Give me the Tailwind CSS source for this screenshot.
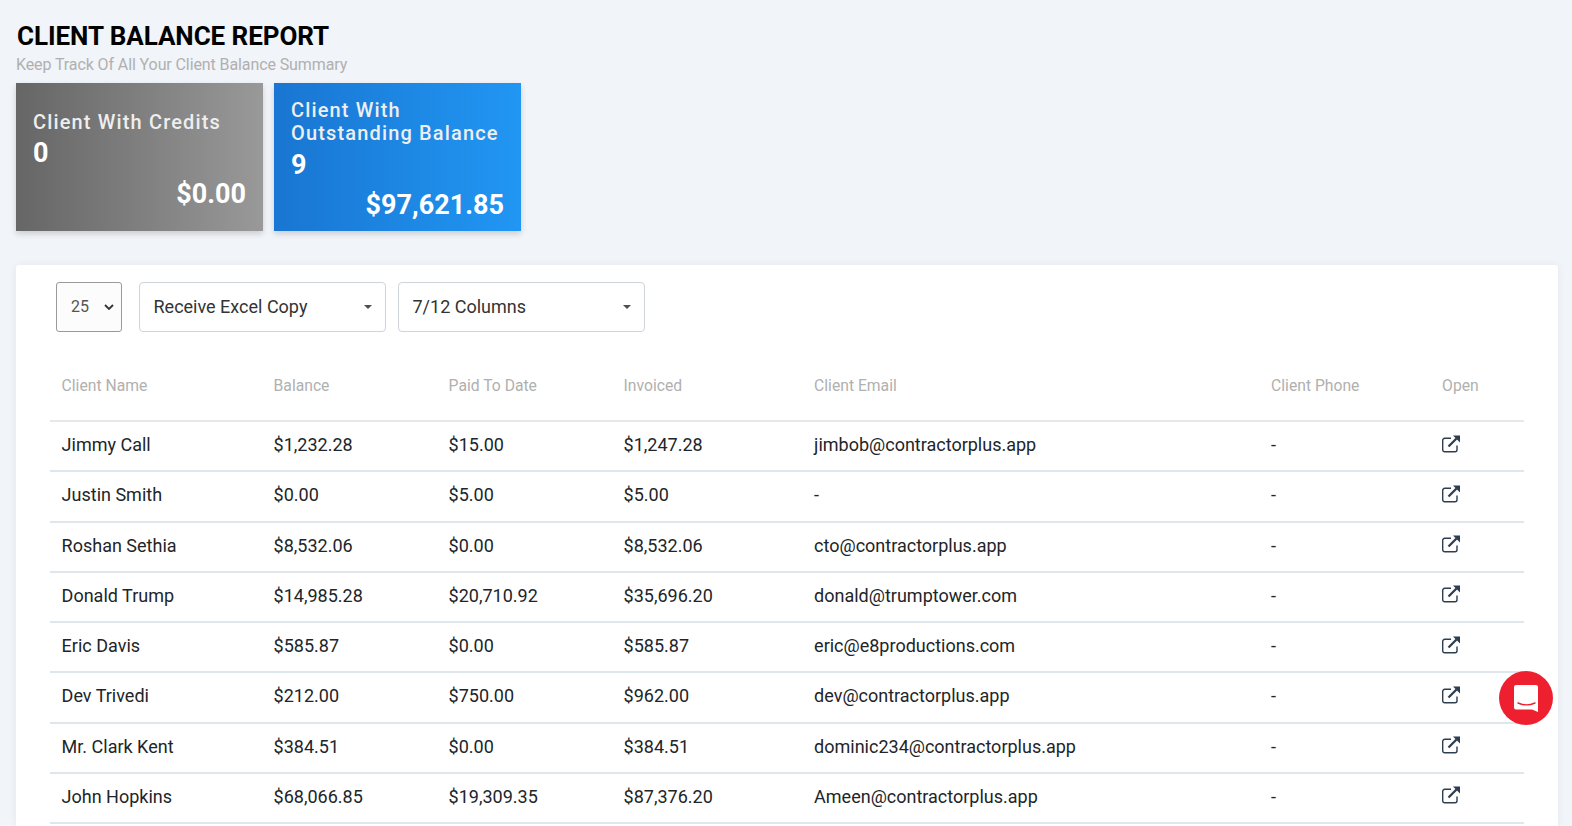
<!doctype html>
<html><head><meta charset="utf-8"><script src="https://cdn.jsdelivr.net/npm/@tailwindcss/browser@4"></script></head>
<body class="h-[826px] overflow-hidden bg-[#f1f4f9] font-['Roboto',sans-serif]">
<div class="px-4 pt-[19px]">
<h1 class="text-[26px] leading-[34px] font-bold text-black tracking-[-0.06px] pl-[1px]">CLIENT BALANCE REPORT</h1>
<p class="text-base leading-[22px] mt-[1px] text-[#b0b0b0] tracking-[-0.1px]">Keep Track Of All Your Client Balance Summary</p>
<div class="flex gap-[11px] mt-[7px]">
<div class="w-[247px] h-[148px] px-[17px] pt-[9px] flex flex-col justify-center text-white bg-gradient-to-r from-[#666666] to-[#999999] shadow-[0_3px_6px_rgba(0,0,0,0.16)]">
<div class="text-[20px] leading-[23px] font-medium tracking-[1.15px] text-[#eeeeee]">Client With Credits</div>
<div class="text-[27px] leading-[36px] font-bold mt-[1px]">0</div>
<div class="text-[27px] leading-[36px] font-bold text-right mt-[5px]">$0.00</div>
</div>
<div class="w-[247px] h-[148px] px-[17px] pt-[7px] flex flex-col justify-center text-white bg-gradient-to-r from-[#1976d2] to-[#2196f3] shadow-[0_3px_6px_rgba(0,0,0,0.16)]">
<div class="text-[20px] leading-[23px] font-medium tracking-[1.15px] text-[#eeeeee]">Client With<br>Outstanding Balance</div>
<div class="text-[27px] leading-[36px] font-bold mt-[2px]">9</div>
<div class="text-[27px] leading-[36px] font-bold text-right mt-[4px]">$97,621.85</div>
</div>
</div>
</div>
<div class="mx-4 mt-[34px] mr-[14px] h-[561px] overflow-hidden bg-white rounded-t-[3px] shadow-[0_0_8px_rgba(0,0,0,0.06)] px-[34px] pt-[17px]">
<div class="flex items-center pl-[6px]">
<div class="w-[66px] h-[50px] flex items-center justify-between pl-[14px] pr-[7px] bg-[#fcfcfc] border border-[#9a9a9a] rounded-[3px] text-base text-[#555555]">25
<svg class="w-[10px] h-[6px]" viewBox="0 0 10 6" fill="none" stroke="#333" stroke-width="1.8"><path d="M1 1l4 4 4-4"/></svg></div>
<div class="ml-[17px] w-[247px] h-[50px] flex items-center justify-between pl-[13.5px] pr-[13px] bg-white border border-[#ced4da] rounded-[4px] text-[18px] text-[#333333]"><span class="pb-[2px]">Receive Excel Copy</span><span class="w-0 h-0 border-x-[4px] border-x-transparent border-t-[4px] border-t-[#495057]"></span></div>
<div class="ml-[12px] w-[247px] h-[50px] flex items-center justify-between pl-[13.5px] pr-[13px] bg-white border border-[#ced4da] rounded-[4px] text-[18px] text-[#333333]"><span class="pb-[2px]">7/12 Columns</span><span class="w-0 h-0 border-x-[4px] border-x-transparent border-t-[4px] border-t-[#495057]"></span></div>
</div>
<table class="mt-[22px] w-[1474px] table-fixed border-collapse text-[18px] text-[#212529]">
<colgroup><col class="w-[212px]"><col class="w-[175px]"><col class="w-[175px]"><col class="w-[190.5px]"><col class="w-[457px]"><col class="w-[171px]"><col></colgroup>
<thead><tr class="h-[67px] border-b-2 border-[#e8e8e8] text-left text-[15.7px] text-[#b0b0b0] [&_th]:font-normal [&_th]:pl-[11.6px] [&_th]:pb-[2px]">
<th>Client Name</th><th>Balance</th><th>Paid To Date</th><th>Invoiced</th><th>Client Email</th><th>Client Phone</th><th>Open</th></tr></thead>
<tbody class="[&_td]:pl-[11.6px] [&_td]:pb-[3px] [&_tr]:h-[50.25px] [&_tr]:border-b-2 [&_tr]:border-[#dee6ee]">
<tr><td>Jimmy Call</td><td>$1,232.28</td><td>$15.00</td><td>$1,247.28</td><td>jimbob@contractorplus.app</td><td>-</td><td><svg class="w-[18px] h-[18px] -translate-y-[1px]" viewBox="0 0 18 18" fill="none" stroke="#2c3e50" stroke-width="1.4"><path d="M15 10.5v4.3a2 2 0 0 1-2 2H2.7a2 2 0 0 1-2-2V5.3a2 2 0 0 1 2-2H9"/><path d="M6.5 11.5L14.5 3.5" stroke-width="2.3"/><path d="M11 .5h7v7z" fill="#2c3e50" stroke="none"/></svg></td></tr>
<tr><td>Justin Smith</td><td>$0.00</td><td>$5.00</td><td>$5.00</td><td>-</td><td>-</td><td><svg class="w-[18px] h-[18px] -translate-y-[1px]" viewBox="0 0 18 18" fill="none" stroke="#2c3e50" stroke-width="1.4"><path d="M15 10.5v4.3a2 2 0 0 1-2 2H2.7a2 2 0 0 1-2-2V5.3a2 2 0 0 1 2-2H9"/><path d="M6.5 11.5L14.5 3.5" stroke-width="2.3"/><path d="M11 .5h7v7z" fill="#2c3e50" stroke="none"/></svg></td></tr>
<tr><td>Roshan Sethia</td><td>$8,532.06</td><td>$0.00</td><td>$8,532.06</td><td>cto@contractorplus.app</td><td>-</td><td><svg class="w-[18px] h-[18px] -translate-y-[1px]" viewBox="0 0 18 18" fill="none" stroke="#2c3e50" stroke-width="1.4"><path d="M15 10.5v4.3a2 2 0 0 1-2 2H2.7a2 2 0 0 1-2-2V5.3a2 2 0 0 1 2-2H9"/><path d="M6.5 11.5L14.5 3.5" stroke-width="2.3"/><path d="M11 .5h7v7z" fill="#2c3e50" stroke="none"/></svg></td></tr>
<tr><td>Donald Trump</td><td>$14,985.28</td><td>$20,710.92</td><td>$35,696.20</td><td>donald@trumptower.com</td><td>-</td><td><svg class="w-[18px] h-[18px] -translate-y-[1px]" viewBox="0 0 18 18" fill="none" stroke="#2c3e50" stroke-width="1.4"><path d="M15 10.5v4.3a2 2 0 0 1-2 2H2.7a2 2 0 0 1-2-2V5.3a2 2 0 0 1 2-2H9"/><path d="M6.5 11.5L14.5 3.5" stroke-width="2.3"/><path d="M11 .5h7v7z" fill="#2c3e50" stroke="none"/></svg></td></tr>
<tr><td>Eric Davis</td><td>$585.87</td><td>$0.00</td><td>$585.87</td><td>eric@e8productions.com</td><td>-</td><td><svg class="w-[18px] h-[18px] -translate-y-[1px]" viewBox="0 0 18 18" fill="none" stroke="#2c3e50" stroke-width="1.4"><path d="M15 10.5v4.3a2 2 0 0 1-2 2H2.7a2 2 0 0 1-2-2V5.3a2 2 0 0 1 2-2H9"/><path d="M6.5 11.5L14.5 3.5" stroke-width="2.3"/><path d="M11 .5h7v7z" fill="#2c3e50" stroke="none"/></svg></td></tr>
<tr><td>Dev Trivedi</td><td>$212.00</td><td>$750.00</td><td>$962.00</td><td>dev@contractorplus.app</td><td>-</td><td><svg class="w-[18px] h-[18px] -translate-y-[1px]" viewBox="0 0 18 18" fill="none" stroke="#2c3e50" stroke-width="1.4"><path d="M15 10.5v4.3a2 2 0 0 1-2 2H2.7a2 2 0 0 1-2-2V5.3a2 2 0 0 1 2-2H9"/><path d="M6.5 11.5L14.5 3.5" stroke-width="2.3"/><path d="M11 .5h7v7z" fill="#2c3e50" stroke="none"/></svg></td></tr>
<tr><td>Mr. Clark Kent</td><td>$384.51</td><td>$0.00</td><td>$384.51</td><td>dominic234@contractorplus.app</td><td>-</td><td><svg class="w-[18px] h-[18px] -translate-y-[1px]" viewBox="0 0 18 18" fill="none" stroke="#2c3e50" stroke-width="1.4"><path d="M15 10.5v4.3a2 2 0 0 1-2 2H2.7a2 2 0 0 1-2-2V5.3a2 2 0 0 1 2-2H9"/><path d="M6.5 11.5L14.5 3.5" stroke-width="2.3"/><path d="M11 .5h7v7z" fill="#2c3e50" stroke="none"/></svg></td></tr>
<tr><td>John Hopkins</td><td>$68,066.85</td><td>$19,309.35</td><td>$87,376.20</td><td>Ameen@contractorplus.app</td><td>-</td><td><svg class="w-[18px] h-[18px] -translate-y-[1px]" viewBox="0 0 18 18" fill="none" stroke="#2c3e50" stroke-width="1.4"><path d="M15 10.5v4.3a2 2 0 0 1-2 2H2.7a2 2 0 0 1-2-2V5.3a2 2 0 0 1 2-2H9"/><path d="M6.5 11.5L14.5 3.5" stroke-width="2.3"/><path d="M11 .5h7v7z" fill="#2c3e50" stroke="none"/></svg></td></tr>
</tbody></table>
</div>
<button class="fixed left-[1499px] top-[671px] w-[54px] h-[54px] rounded-full bg-[#ee2030] flex items-center justify-center">
<svg class="w-[24px] h-[27px]" viewBox="0 0 24 27"><path d="M2 0h20a2 2 0 0 1 2 2v25l-6-2.500H2a2 2 0 0 1-2-2V2a2 2 0 0 1 2-2z" fill="#fff"/><path d="M4 18q8.500 3.800 17 0" fill="none" stroke="#ee2030" stroke-width="1.4" stroke-linecap="round"/></svg>
</button>
</body></html>
